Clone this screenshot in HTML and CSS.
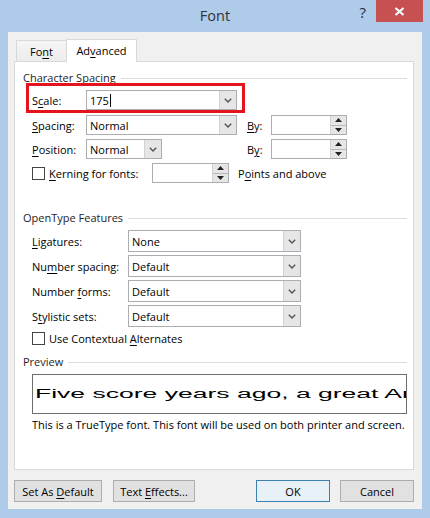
FILE: index.html
```html
<!DOCTYPE html>
<html>
<head>
<meta charset="utf-8">
<title>Font</title>
<link rel="stylesheet" href="styles.css">
</head>
<body>
<div class="titlebar">
  <div></div>
  <div class="title">Font</div>
  <div class="caption-btns">
    <span class="help">?</span>
    <span class="close"><svg width="11" height="9" viewBox="0 0 11 9"><path d="M1.5 1 L9.5 8 M9.5 1 L1.5 8" stroke="#fff" stroke-width="2.2" fill="none"/></svg></span>
  </div>
</div>
<div class="client">
  <div class="tabs">
    <div class="tab tab-font"><span>Fo<u>n</u>t</span></div>
    <div class="tab tab-adv"><span>Ad<u>v</u>anced</span></div>
  </div>
  <div class="panel">
    <div class="hdr"><span>Character Spacing</span></div>

    <div class="row row-scale">
      <span class="lbl1">S<u>c</u>ale:</span>
      <div class="combo w151"><span class="val">175<span class="caret"></span></span><span class="arrow"><svg width="8" height="5" viewBox="0 0 8 5"><path d="M0.8 0.8 L4 4 L7.2 0.8" stroke="#555" stroke-width="1.4" fill="none"/></svg></span></div>
      <div class="hl"></div>
    </div>

    <div class="row row-spacing">
      <span class="lbl1"><u>S</u>pacing:</span>
      <div class="combo w151"><span class="val">Normal</span><span class="arrow"><svg width="8" height="5" viewBox="0 0 8 5"><path d="M0.8 0.8 L4 4 L7.2 0.8" stroke="#555" stroke-width="1.4" fill="none"/></svg></span></div>
      <span class="by by1"><u>B</u>y:</span>
      <div class="spin w76"><span class="val"></span><span class="sbtns"><span class="sb"><svg width="7" height="4" viewBox="0 0 7 4"><path d="M0 4 L3.5 0 L7 4 Z" fill="#222"/></svg></span><span class="sb"><svg width="7" height="4" viewBox="0 0 7 4"><path d="M0 0 L3.5 4 L7 0 Z" fill="#222"/></svg></span></span></div>
    </div>

    <div class="row row-pos">
      <span class="lbl1"><u>P</u>osition:</span>
      <div class="combo w76"><span class="val">Normal</span><span class="arrow"><svg width="8" height="5" viewBox="0 0 8 5"><path d="M0.8 0.8 L4 4 L7.2 0.8" stroke="#555" stroke-width="1.4" fill="none"/></svg></span></div>
      <span class="by by2">B<u>y</u>:</span>
      <div class="spin w76"><span class="val"></span><span class="sbtns"><span class="sb"><svg width="7" height="4" viewBox="0 0 7 4"><path d="M0 4 L3.5 0 L7 4 Z" fill="#222"/></svg></span><span class="sb"><svg width="7" height="4" viewBox="0 0 7 4"><path d="M0 0 L3.5 4 L7 0 Z" fill="#222"/></svg></span></span></div>
    </div>

    <div class="row row-kern">
      <span class="chk"></span>
      <span class="kern-lbl"><u>K</u>erning for fonts:</span>
      <div class="spin w77"><span class="val"></span><span class="sbtns"><span class="sb"><svg width="7" height="4" viewBox="0 0 7 4"><path d="M0 4 L3.5 0 L7 4 Z" fill="#222"/></svg></span><span class="sb"><svg width="7" height="4" viewBox="0 0 7 4"><path d="M0 0 L3.5 4 L7 0 Z" fill="#222"/></svg></span></span></div>
      <span class="pts">P<u>o</u>ints and above</span>
    </div>

    <div class="hdr hdr2"><span>OpenType Features</span></div>

    <div class="row2 first">
      <span class="lbl2"><u>L</u>igatures:</span>
      <div class="combo w173 h22"><span class="val">None</span><span class="arrow"><svg width="8" height="5" viewBox="0 0 8 5"><path d="M0.8 0.8 L4 4 L7.2 0.8" stroke="#555" stroke-width="1.4" fill="none"/></svg></span></div>
    </div>
    <div class="row2">
      <span class="lbl2">Nu<u>m</u>ber spacing:</span>
      <div class="combo w173 h22"><span class="val">Default</span><span class="arrow"><svg width="8" height="5" viewBox="0 0 8 5"><path d="M0.8 0.8 L4 4 L7.2 0.8" stroke="#555" stroke-width="1.4" fill="none"/></svg></span></div>
    </div>
    <div class="row2">
      <span class="lbl2">Number <u>f</u>orms:</span>
      <div class="combo w173 h22"><span class="val">Default</span><span class="arrow"><svg width="8" height="5" viewBox="0 0 8 5"><path d="M0.8 0.8 L4 4 L7.2 0.8" stroke="#555" stroke-width="1.4" fill="none"/></svg></span></div>
    </div>
    <div class="row2">
      <span class="lbl2">S<u>t</u>ylistic sets:</span>
      <div class="combo w173 h22"><span class="val">Default</span><span class="arrow"><svg width="8" height="5" viewBox="0 0 8 5"><path d="M0.8 0.8 L4 4 L7.2 0.8" stroke="#555" stroke-width="1.4" fill="none"/></svg></span></div>
    </div>

    <div class="row row-ctx">
      <span class="chk"></span>
      <span class="ctx-lbl">Use Contextual <u>A</u>lternates</span>
    </div>

    <div class="hdr hdr3"><span>Preview</span></div>
    <div class="preview"><span class="pv">Five score years ago, a great Ar</span></div>
    <div class="note">This is a TrueType font. This font will be used on both printer and screen.</div>
  </div>

  <div class="buttons">
    <div class="btn b-default"><span>Set As <u>D</u>efault</span></div>
    <div class="btn b-effects"><span>Text <u>E</u>ffects...</span></div>
    <div class="btn b-ok"><span>OK</span></div>
    <div class="btn b-cancel"><span>Cancel</span></div>
  </div>
</div>
</body>
</html>
```
FILE: styles.css
```css
* { box-sizing: border-box; }
html, body { margin: 0; padding: 0; }
body {
  width: 430px;
  height: 518px;
  overflow: hidden;
  background: #aecbea;
  font-family: "Open Sans", "Noto Sans", sans-serif;
  font-size: 11px;
  color: #000;
}
u { text-decoration-thickness: 1px; text-underline-offset: 2px; }

/* title bar */
.titlebar {
  height: 32px;
  display: grid;
  grid-template-columns: 1fr auto 1fr;
}
.title {
  font-size: 14.5px;
  color: #333;
  line-height: 32px;
}
.caption-btns {
  display: flex;
  justify-content: flex-end;
  align-items: flex-start;
  padding-right: 7px;
}
.help {
  font-size: 15px;
  line-height: 20px;
  color: #1f2b44;
  margin-top: 2px;
  margin-right: 10px;
}
.close {
  width: 47px;
  height: 22px;
  background: #c75050;
  display: flex;
  align-items: center;
  justify-content: center;
}

/* client area */
.client {
  margin: 0 8px;
  height: 477px;
  background: #f0f0f0;
  padding: 7px 8px 0 6px;
}
.tabs {
  display: flex;
  align-items: flex-end;
  height: 22px;
  margin-left: 2px;
}
.tab {
  border: 1px solid #d9d9d9;
  border-bottom: none;
  display: flex;
  align-items: center;
  justify-content: center;
}
.tab-font {
  width: 50px;
  height: 21px;
  border-right: none;
  background: linear-gradient(#f5f5f5, #ececec);
}
.tab-adv {
  width: 71px;
  height: 23px;
  margin-bottom: -1px;
  background: #fff;
  position: relative;
  z-index: 1;
  padding-bottom: 2px;
}
.panel {
  border: 1px solid #d9d9d9;
  background: #fff;
  height: 409px;
  padding: 7px 6px 0 8px;
}

.hdr {
  display: flex;
  align-items: center;
  gap: 5px;
  height: 16px;
  color: #1e1e1e;
}
.hdr::after {
  content: "";
  flex: 1;
  border-top: 1px solid #dcdcdc;
  margin-top: 2px;
}
.hdr2 { margin-top: 26px; }
.hdr3 { margin-top: 7px; }

.row {
  display: flex;
  align-items: center;
  height: 20px;
  margin-left: 9px;
  position: relative;
}
.row-scale { margin-top: 5px; }
.row-spacing { margin-top: 5px; }
.row-pos { margin-top: 4px; }
.row-kern { margin-top: 4px; }
.row-ctx { margin-top: 3px; height: 16px; }

/* red annotation frame around the Scale row */
.hl {
  position: absolute;
  left: -6px;
  top: -7px;
  width: 219px;
  height: 30px;
  border: 3px solid #e3141b;
  pointer-events: none;
}

.lbl1 { width: 54px; }
.lbl2 { width: 96px; }

.combo {
  height: 20px;
  border: 1px solid #abadb3;
  background: #fff;
  display: flex;
  align-items: stretch;
}
.combo .val {
  flex: 1;
  padding-left: 3px;
  display: flex;
  align-items: center;
}
.combo .arrow {
  width: 17px;
  background: #e6e6e6;
  border-left: 1px solid #d2d2d2;
  display: flex;
  align-items: center;
  justify-content: center;
}
.caret {
  display: inline-block;
  width: 0;
  height: 13px;
  border-left: 1px solid #000;
  margin-left: 1px;
}
.w151 { width: 151px; }
.w76 { width: 76px; }
.w77 { width: 77px; }
.w173 { width: 173px; }
.h22 { height: 22px; }

.by { width: 24px; }
.by1 { margin-left: 10px; }
.by2 { margin-left: 85px; }

.spin {
  height: 20px;
  border: 1px solid #abadb3;
  background: #fff;
  display: flex;
}
.spin .val { flex: 1; }
.sbtns {
  width: 16px;
  display: flex;
  flex-direction: column;
  background: #e6e6e6;
  border-left: 1px solid #d2d2d2;
}
.sb {
  flex: 1;
  display: flex;
  align-items: center;
  justify-content: center;
}
.sb + .sb { border-top: 1px solid #b8b8b8; }

.chk {
  width: 13px;
  height: 13px;
  border: 1px solid #444;
  background: #fff;
}
.kern-lbl { width: 103px; margin-left: 4px; }
.ctx-lbl { margin-left: 4px; }
.pts { margin-left: 9px; }

.row2 {
  display: flex;
  align-items: center;
  height: 22px;
  margin-left: 9px;
  margin-top: 3px;
}
.row2.first { margin-top: 5px; }

.preview {
  margin-top: 5px;
  margin-left: 9px;
  height: 40px;
  border: 1px solid #6e6e6e;
  overflow: hidden;
  display: flex;
  align-items: center;
  padding-left: 2px;
}
.pv {
  display: inline-block;
  white-space: nowrap;
  font-family: "Liberation Sans", Arial, sans-serif;
  font-size: 12px;
  transform: scaleX(2.21);
  transform-origin: left center;
  color: #000;
}
.note {
  margin-top: 3px;
  margin-left: 9px;
  line-height: 16px;
  white-space: nowrap;
}

/* bottom buttons */
.buttons {
  display: flex;
  margin-top: 10px;
}
.btn {
  height: 22px;
  border: 1px solid #adadad;
  background: #e1e1e1;
  display: flex;
  align-items: center;
  justify-content: center;
}
.b-default { width: 88px; }
.b-effects { width: 82px; margin-left: 11px; }
.b-ok {
  width: 74px;
  margin-left: auto;
  border-color: #3c7fb1;
  background: #e8f0f8;
}
.b-cancel { width: 74px; margin-left: 10px; }
```
